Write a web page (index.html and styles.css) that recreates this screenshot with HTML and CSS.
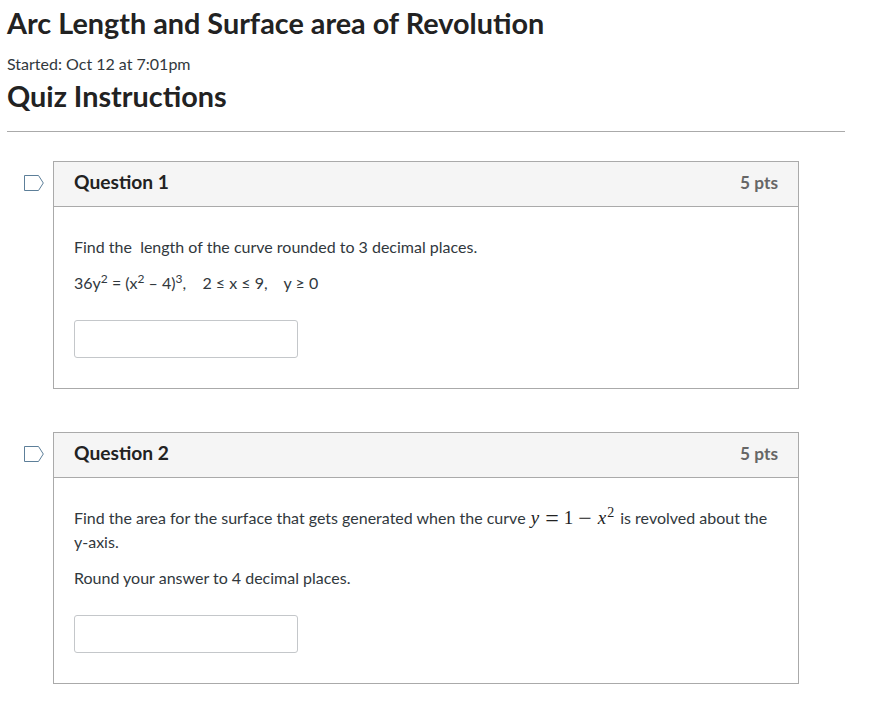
FILE: index.html
```html
<!DOCTYPE html>
<html lang="en">
<head>
    <meta charset="UTF-8">
    <meta name="viewport" content="width=device-width, initial-scale=1.0">
    <title>Arc Length and Surface area of Revolution</title>
    <link rel="stylesheet" href="styles.css">
</head>
<body>
    <div class="quiz">
        <h1>Arc Length and Surface area of Revolution</h1>
        <div class="started">Started: Oct 12 at 7:01pm</div>
        <h2>Quiz Instructions</h2>
        <hr>
        <div class="question-row">
            <svg class="flag" width="20" height="16" viewBox="0 0 20 16">
                <path d="M0.5 0.5H14.5L19.3 8L14.5 15.5H0.5Z"/>
            </svg>
            <div class="question">
                <div class="header">
                    <span class="name">Question 1</span>
                    <span class="points">5 pts</span>
                </div>
                <div class="text">
                    <p>Find the&nbsp; length of the curve rounded to 3 decimal places.</p>
                    <p>36y<sup>2</sup> = (x<sup>2</sup> – 4)<sup>3</sup>,&nbsp;&nbsp;&nbsp; 2 ≤ x ≤ 9,&nbsp;&nbsp;&nbsp; y ≥ 0</p>
                    <input type="text" aria-label="Answer 1">
                </div>
            </div>
        </div>
        <div class="question-row">
            <svg class="flag" width="20" height="16" viewBox="0 0 20 16">
                <path d="M0.5 0.5H14.5L19.3 8L14.5 15.5H0.5Z"/>
            </svg>
            <div class="question">
                <div class="header">
                    <span class="name">Question 2</span>
                    <span class="points">5 pts</span>
                </div>
                <div class="text">
                    <p>Find the area for the surface that gets generated when the curve <span class="math"><i>y</i><span class="op">=</span>1<span class="op">−</span><i>x</i><sup>2</sup></span> is revolved about the <span class="axis">y-axis.</span></p>
                    <p>Round your answer to 4 decimal places.</p>
                    <input type="text" aria-label="Answer 2">
                </div>
            </div>
        </div>
    </div>
</body>
</html>
```
FILE: styles.css
```css
body {
    margin: 0;
    font-family: Lato, "Liberation Sans", sans-serif;
    font-size: 16px;
    line-height: 24px;
    color: #31383d;
    background: #fff;
}
.quiz {
    width: 838px;
    margin-left: 7px;
}
h1, h2 {
    margin: 0;
    font-size: 28.8px;
    line-height: 42px;
    font-weight: bold;
    color: #222;
}
h1 {
    padding-top: 2px;
}
.started {
    margin-top: 8px;
}
h2 {
    line-height: 40px;
}
hr {
    margin: 15px 0 29px;
    border: 0;
    border-top: 1px solid #aaa;
}
.question-row {
    display: flex;
    align-items: flex-start;
    margin-bottom: 43px;
}
.flag {
    margin: 14px 9px 0 17px;
    fill: #fff;
    stroke: #5d7f99;
}
.question {
    box-sizing: border-box;
    width: 746px;
    border: 1px solid #aaa;
}
.header {
    display: flex;
    justify-content: space-between;
    height: 44px;
    padding: 0 20px;
    line-height: 42px;
    background: #f5f5f5;
    border-bottom: 1px solid #aaa;
    font-weight: bold;
}
.name {
    font-size: 19.2px;
    line-height: 40px;
    color: #222;
}
.points {
    font-size: 17.3px;
    color: #666;
}
.text {
    padding: 28px 20px 30px;
}
p {
    margin: 0 0 12px;
}
sup {
    font-size: 12px;
    line-height: 1;
    vertical-align: baseline;
    position: relative;
    top: -6px;
}
.math {
    margin-right: 2px;
    font-family: "Liberation Serif", serif;
    font-size: 19px;
    line-height: 1;
    color: #222;
    white-space: nowrap;
}
.math i {
    margin: 0 1px;
}
.math sup {
    font-size: 14px;
    top: -7px;
}
.op {
    margin: 0 5px;
    font-size: 24px;
    line-height: 16px;
    vertical-align: -2px;
}
.axis {
    white-space: nowrap;
}
input {
    display: block;
    box-sizing: border-box;
    width: 224px;
    height: 38px;
    margin-top: 25px;
    border: 1px solid #c4c7ca;
    border-radius: 3px;
}
```
